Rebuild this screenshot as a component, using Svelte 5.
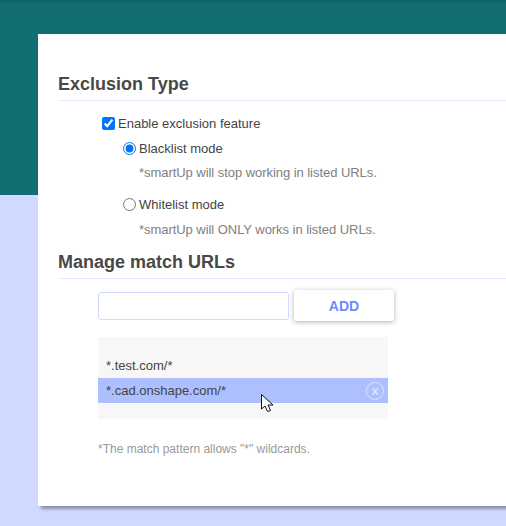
<script>
	let urlList = ['*.test.com/*', '*.cad.onshape.com/*'];
	let activeIndex = 1;
	let exclusionOn = true;
	let mode = 'blacklist';
	let newUrl = '';
</script>

<main class="card">
	<h2 class="title first">Exclusion Type</h2>
	<div class="options">
		<label class="check">
			<input type="checkbox" bind:checked={exclusionOn} />
			Enable exclusion feature
		</label>
		<div class="modes">
			<label class="radio">
				<input type="radio" value="blacklist" bind:group={mode} />
				Blacklist mode
			</label>
			<p class="hint">*smartUp will stop working in listed URLs.</p>
			<label class="radio">
				<input type="radio" value="whitelist" bind:group={mode} />
				Whitelist mode
			</label>
			<p class="hint">*smartUp will ONLY works in listed URLs.</p>
		</div>
	</div>

	<h2 class="title second">Manage match URLs</h2>
	<div class="manage">
		<div class="add-row">
			<input class="url-input" type="text" bind:value={newUrl} />
			<button class="add-btn">ADD</button>
		</div>
		<ul class="url-list">
			{#each urlList as url, i}
				<li class:active={i === activeIndex}>
					<span>{url}</span>
					{#if i === activeIndex}
						<span class="remove">x</span>
						<svg class="cursor" width="15" height="20" viewBox="0 0 15 20">
							<path d="M1.5 1.5V16L5 13L7.5 18.5L10.5 17.5L8 12H13Z" fill="#fff" stroke="#111" stroke-width="1" />
						</svg>
					{/if}
				</li>
			{/each}
		</ul>
		<p class="note">*The match pattern allows "*" wildcards.</p>
	</div>
</main>

<style>
	:global(body) {
		height: 526px;
		overflow: hidden;
		background: linear-gradient(#0e6065, #126e73 4px, #126e73 195px, #d0d9ff 195px);
		font-family: "Liberation Sans", Roboto, sans-serif;
	}

	.card {
		margin: 34px 0 0 38px;
		height: 472px;
		padding: 40px 0 0 20px;
		box-sizing: border-box;
		background: #fff;
		box-shadow: 3px 3px 3px #8a90ab;
	}

	.title {
		margin: 0;
		padding-bottom: 5px;
		border-bottom: 1px solid #e8e8ff;
		color: #484848;
		font-size: 18px;
		line-height: 21px;
		font-weight: 700;
	}

	.title.second {
		margin-top: 14px;
	}

	.options {
		padding: 14px 0 0 44px;
	}

	.check, .radio {
		display: flex;
		align-items: center;
		height: 16px;
		color: #444;
		font-size: 13px;
	}

	.check input, .radio input {
		margin: 0 3px 0 0;
		width: 13px;
		height: 13px;
	}

	.modes {
		padding: 9px 0 0 21px;
	}

	.hint {
		margin: 9px 0 15px 16px;
		color: #808080;
		font-size: 13px;
		line-height: 16px;
		letter-spacing: -0.05px;
	}

	.hint:last-child {
		margin-top: 10px;
		margin-bottom: 0;
	}

	.manage {
		padding: 11px 0 0 40px;
	}

	.add-row {
		display: flex;
		align-items: center;
		gap: 5px;
	}

	.url-input {
		box-sizing: border-box;
		width: 191px;
		height: 28px;
		border: 1px solid #d0d9ff;
		border-radius: 3px;
		outline: none;
	}

	.add-btn {
		width: 100px;
		height: 31px;
		border: none;
		border-radius: 2px;
		background: #fff;
		box-shadow: 0 1px 5px rgba(0, 0, 0, 0.3);
		color: #6f88ff;
		font: 700 14px "Liberation Sans", Roboto, sans-serif;
	}

	.url-list {
		width: 290px;
		margin: 16px 0 0;
		padding: 16px 0;
		list-style: none;
		background: #f7f7f7;
	}

	.url-list li {
		position: relative;
		display: flex;
		align-items: center;
		justify-content: space-between;
		height: 25px;
		padding: 0 4px 0 8px;
		color: #444;
		font-size: 13px;
	}

	.url-list li.active {
		background: #aebfff;
	}

	.remove {
		box-sizing: border-box;
		width: 18px;
		height: 18px;
		border: 1px solid #dbe2ff;
		border-radius: 50%;
		color: #dbe2ff;
		font-size: 13px;
		font-weight: 700;
		line-height: 15px;
		text-align: center;
	}

	.cursor {
		position: absolute;
		left: 162px;
		top: 15px;
	}

	.note {
		margin: 23px 0 0;
		color: #999;
		font-size: 12px;
		line-height: 14px;
	}
</style>
